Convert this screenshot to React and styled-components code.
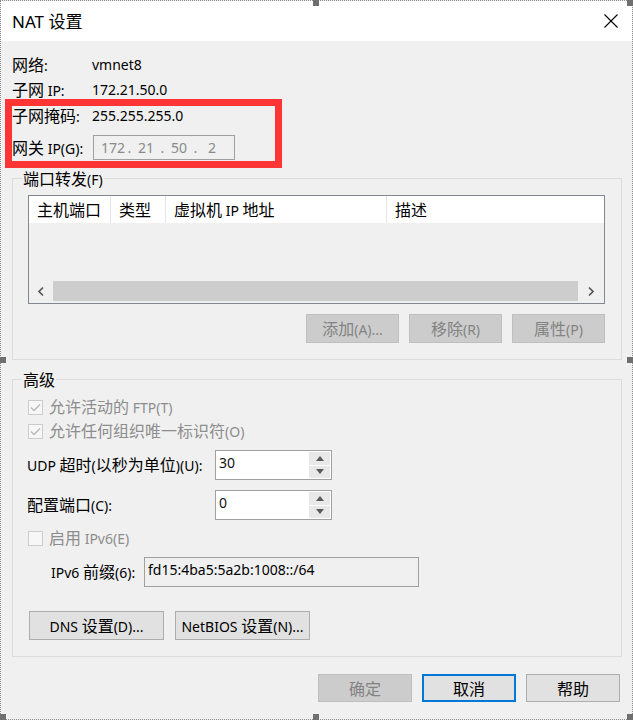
import React from 'react';
import styled, { createGlobalStyle, css } from 'styled-components';

const GlobalStyle = createGlobalStyle`
  html, body {
    margin: 0;
    padding: 0;
    background: #fff;
  }
  body {
    font-family: "Noto Sans CJK SC", "Noto Sans", sans-serif;
    font-size: 16px;
    color: #000;
  }
`;

const Lat = styled.span`
  font-family: "Noto Sans", "Liberation Sans", sans-serif;
  font-size: ${p => p.$size || 14}px;
`;

// splits a label so latin runs get the smaller latin face
const CJK = /([\u2E80-\u9FFF\uFF00-\uFFEF]+)/;
const Mixed = ({ text, size }) =>
  text.split(CJK).filter(Boolean).map((part, i) =>
    CJK.test(part) ? <span key={i}>{part}</span> : <Lat key={i} $size={size}>{part}</Lat>
  );

const Frame = styled.div`
  position: relative;
  width: 633px;
  height: 720px;
  box-sizing: border-box;
  border: 1px dotted #8c8c8c;
  background: #f0f0f0;
  display: flex;
  flex-direction: column;
`;

const Handle = styled.div`
  position: absolute;
  width: 6px;
  height: 6px;
  background: #6f6f6f;
  ${p => p.$at}
`;

const Mark = styled.div`
  position: absolute;
  left: 4px;
  top: 98px;
  width: 277px;
  height: 69px;
  box-sizing: border-box;
  border: 7px solid #ff3535;
  pointer-events: none;
`;

const TitleBar = styled.div`
  flex: none;
  height: 40px;
  background: #fff;
  display: flex;
  align-items: center;
  justify-content: space-between;
  padding: 0 14px 0 11px;
`;

const Title = styled.div`
  font-size: 17px;
  line-height: 24px;
`;

const Body = styled.div`
  flex: 1;
  display: flex;
  flex-direction: column;
  padding: 11px 10px 0 11px;
`;

const InfoRow = styled.div`
  display: grid;
  grid-template-columns: 80px auto;
  align-items: center;
  height: ${p => p.$h}px;
  line-height: 20px;
`;

const IpBox = styled.div`
  justify-self: start;
  margin-left: 1px;
  box-sizing: border-box;
  width: 142px;
  height: 25px;
  border: 1px solid #a0a0a0;
  background: #f0f0f0;
  display: flex;
  align-items: center;
  padding-left: 7px;
  color: #8a8a8a;
  font-family: "Noto Sans", sans-serif;
  font-size: 14px;
`;

const Octet = styled.span`
  width: 24px;
  text-align: center;
`;

const Dot = styled.span`
  width: 9px;
  text-align: center;
`;

const Group = styled.fieldset`
  margin: ${p => p.$mt}px 0 0;
  padding: ${p => p.$pt}px 16px ${p => p.$pb}px 15px;
  border: 1px solid #dcdcdc;
  min-width: 0;
`;

const Legend = styled.legend`
  padding: 0 1px;
  margin-left: -6px;
  height: 20px;
  font-size: 16px;
  line-height: 20px;
`;

const Table = styled.div`
  border: 1px solid #828790;
  display: flex;
  flex-direction: column;
`;

const HeaderRow = styled.div`
  display: grid;
  grid-template-columns: 82px 55px 221px 1fr;
  height: 27px;
  background: #fff;
`;

const HeadCell = styled.div`
  padding-left: 8px;
  line-height: 27px;
  border-right: 1px solid #e5e5e5;
  &:last-child {
    border-right: none;
  }
`;

const TableBody = styled.div`
  height: 56px;
  background: #f0f0f0;
`;

const ScrollBar = styled.div`
  height: 24px;
  display: flex;
  align-items: center;
  background: #f0f0f0;
`;

const ScrollArrow = styled.div`
  width: ${p => p.$w}px;
  height: 100%;
  display: flex;
  align-items: center;
  justify-content: center;
`;

const Thumb = styled.div`
  flex: 1;
  height: 20px;
  background: #cdcdcd;
`;

const ButtonRow = styled.div`
  display: flex;
  justify-content: ${p => (p.$start ? 'flex-start' : 'flex-end')};
  gap: ${p => p.$gap || 10}px;
  margin-top: ${p => p.$mt}px;
  padding-right: ${p => p.$pr || 0}px;
  padding-left: ${p => p.$pl || 0}px;
`;

const Button = styled.button`
  box-sizing: border-box;
  width: ${p => p.$w || 93}px;
  height: ${p => p.$h || 29}px;
  margin: 0;
  padding: 0;
  font-family: inherit;
  font-size: 16px;
  line-height: 20px;
  color: #000;
  background: #e1e1e1;
  border: 1px solid #adadad;
  &:disabled {
    background: #cccccc;
    border-color: #bfbfbf;
    color: #838383;
  }
  ${p => p.$primary && css`
    border: 2px solid #0078d7;
  `}
`;

const CheckRow = styled.div`
  display: flex;
  align-items: center;
  gap: 6px;
  height: 24px;
  line-height: 20px;
  margin-top: ${p => p.$mt || 0}px;
  color: ${p => (p.$disabled ? '#8d8d8d' : '#000')};
`;

const Box = styled.span`
  box-sizing: border-box;
  width: 15px;
  height: 15px;
  border: 1px solid #cccccc;
  background: #f7f7f7;
  display: flex;
  align-items: center;
  justify-content: center;
`;

const FieldRow = styled.div`
  display: grid;
  grid-template-columns: ${p => p.$col}px auto;
  align-items: center;
  margin-top: ${p => p.$mt}px;
  line-height: 20px;
`;

const FieldLabel = styled.div`
  padding-left: ${p => p.$indent || 0}px;
  margin-left: ${p => (p.$indent ? 0 : -1)}px;
`;

const Spin = styled.div`
  box-sizing: border-box;
  width: 117px;
  height: 30px;
  border: 1px solid #a0a0a0;
  background: #fff;
  display: flex;
`;

const SpinValue = styled.div`
  flex: 1;
  padding: 2px 0 0 3px;
  font-family: "Noto Sans", sans-serif;
  font-size: 14px;
  line-height: 20px;
  color: #111;
`;

const SpinButtons = styled.div`
  width: 21px;
  display: flex;
  flex-direction: column;
  gap: 1px;
  padding: 1px;
`;

const SpinBtn = styled.div`
  flex: 1;
  background: #e8e8e8;
  display: flex;
  align-items: center;
  justify-content: center;
`;

const TextBox = styled.div`
  box-sizing: border-box;
  width: 275px;
  height: 30px;
  border: 1px solid #a0a0a0;
  background: #f0f0f0;
  padding: 2px 3px 0;
  font-family: "Noto Sans", sans-serif;
  font-size: 14px;
  line-height: 20px;
`;

const Check = () => (
  <svg width="11" height="9" viewBox="0 0 11 9">
    <polyline points="1,4.5 4,7.5 10,1.5" fill="none" stroke="#b8b8b8" strokeWidth="1.3" />
  </svg>
);

const Chevron = ({ right }) => (
  <svg width="8" height="11" viewBox="0 0 8 11">
    <polyline
      points={right ? '2,1.5 6,5.5 2,9.5' : '6,1.5 2,5.5 6,9.5'}
      fill="none"
      stroke="#555"
      strokeWidth="1.7"
    />
  </svg>
);

const Tri = ({ down }) => (
  <svg width="8" height="5" viewBox="0 0 8 5">
    <polygon points={down ? '0,0 8,0 4,5' : '0,5 8,5 4,0'} fill="#5a5a5a" />
  </svg>
);

const CloseIcon = () => (
  <svg width="14" height="14" viewBox="0 0 14 14">
    <line x1="0.5" y1="0.5" x2="13.5" y2="13.5" stroke="#000" strokeWidth="1.1" />
    <line x1="13.5" y1="0.5" x2="0.5" y2="13.5" stroke="#000" strokeWidth="1.1" />
  </svg>
);

const Spinner = ({ value }) => (
  <Spin>
    <SpinValue>{value}</SpinValue>
    <SpinButtons>
      <SpinBtn><Tri /></SpinBtn>
      <SpinBtn><Tri down /></SpinBtn>
    </SpinButtons>
  </Spin>
);

const info = [
  { label: '网络:', value: 'vmnet8', h: 25 },
  { label: '子网 IP:', value: '172.21.50.0', h: 25 },
  { label: '子网掩码:', value: '255.255.255.0', h: 28 },
];

const columns = ['主机端口', '类型', '虚拟机 IP 地址', '描述'];

const handles = [
  'top: -1px; left: 312px;',
  'top: -1px; right: -1px;',
  'top: 356px; left: -1px;',
  'top: 356px; right: -1px;',
  'bottom: -1px; left: -1px;',
  'bottom: -1px; left: 312px;',
  'bottom: -1px; right: -1px;',
];

export default function App() {
  return (
    <>
      <GlobalStyle />
      <Frame>
        <TitleBar>
          <Title><Mixed text="NAT 设置" size={17} /></Title>
          <CloseIcon />
        </TitleBar>
        <Body>
          {info.map(row => (
            <InfoRow key={row.label} $h={row.h}>
              <span><Mixed text={row.label} /></span>
              <Lat>{row.value}</Lat>
            </InfoRow>
          ))}
          <InfoRow $h={35}>
            <span><Mixed text="网关 IP(G):" /></span>
            <IpBox>
              <Octet>172</Octet><Dot>.</Dot>
              <Octet>21</Octet><Dot>.</Dot>
              <Octet>50</Octet><Dot>.</Dot>
              <Octet>2</Octet>
            </IpBox>
          </InfoRow>

          <Group $mt={3} $pt={7} $pb={16}>
            <Legend><Mixed text="端口转发(F)" /></Legend>
            <Table>
              <HeaderRow>
                {columns.map(c => (
                  <HeadCell key={c}><Mixed text={c} /></HeadCell>
                ))}
              </HeaderRow>
              <TableBody />
              <ScrollBar>
                <ScrollArrow $w={24}><Chevron /></ScrollArrow>
                <Thumb />
                <ScrollArrow $w={26}><Chevron right /></ScrollArrow>
              </ScrollBar>
            </Table>
            <ButtonRow $mt={10}>
              <Button disabled><Mixed text="添加(A)..." /></Button>
              <Button disabled><Mixed text="移除(R)" /></Button>
              <Button disabled><Mixed text="属性(P)" /></Button>
            </ButtonRow>
          </Group>

          <Group $mt={9} $pt={6} $pb={16}>
            <Legend>高级</Legend>
            <CheckRow $disabled>
              <Box><Check /></Box>
              <span><Mixed text="允许活动的 FTP(T)" /></span>
            </CheckRow>
            <CheckRow $disabled>
              <Box><Check /></Box>
              <span><Mixed text="允许任何组织唯一标识符(O)" /></span>
            </CheckRow>
            <FieldRow $col={187} $mt={7}>
              <FieldLabel><Mixed text="UDP 超时(以秒为单位)(U):" /></FieldLabel>
              <Spinner value="30" />
            </FieldRow>
            <FieldRow $col={187} $mt={10}>
              <FieldLabel><Mixed text="配置端口(C):" /></FieldLabel>
              <Spinner value="0" />
            </FieldRow>
            <CheckRow $disabled $mt={6}>
              <Box />
              <span><Mixed text="启用 IPv6(E)" /></span>
            </CheckRow>
            <FieldRow $col={116} $mt={7}>
              <FieldLabel $indent={23}><Mixed text="IPv6 前缀(6):" /></FieldLabel>
              <TextBox>fd15:4ba5:5a2b:1008::/64</TextBox>
            </FieldRow>
            <ButtonRow $start $mt={24} $gap={11} $pl={1}>
              <Button $w={135}><Mixed text="DNS 设置(D)..." /></Button>
              <Button $w={135}><Mixed text="NetBIOS 设置(N)..." /></Button>
            </ButtonRow>
          </Group>

          <ButtonRow $mt={17} $pr={2}>
            <Button disabled $w={94} $h={28}>确定</Button>
            <Button $primary $w={94} $h={28}>取消</Button>
            <Button $w={94} $h={28}>帮助</Button>
          </ButtonRow>
        </Body>
        <Mark />
        {handles.map(h => <Handle key={h} $at={h} />)}
      </Frame>
    </>
  );
}
